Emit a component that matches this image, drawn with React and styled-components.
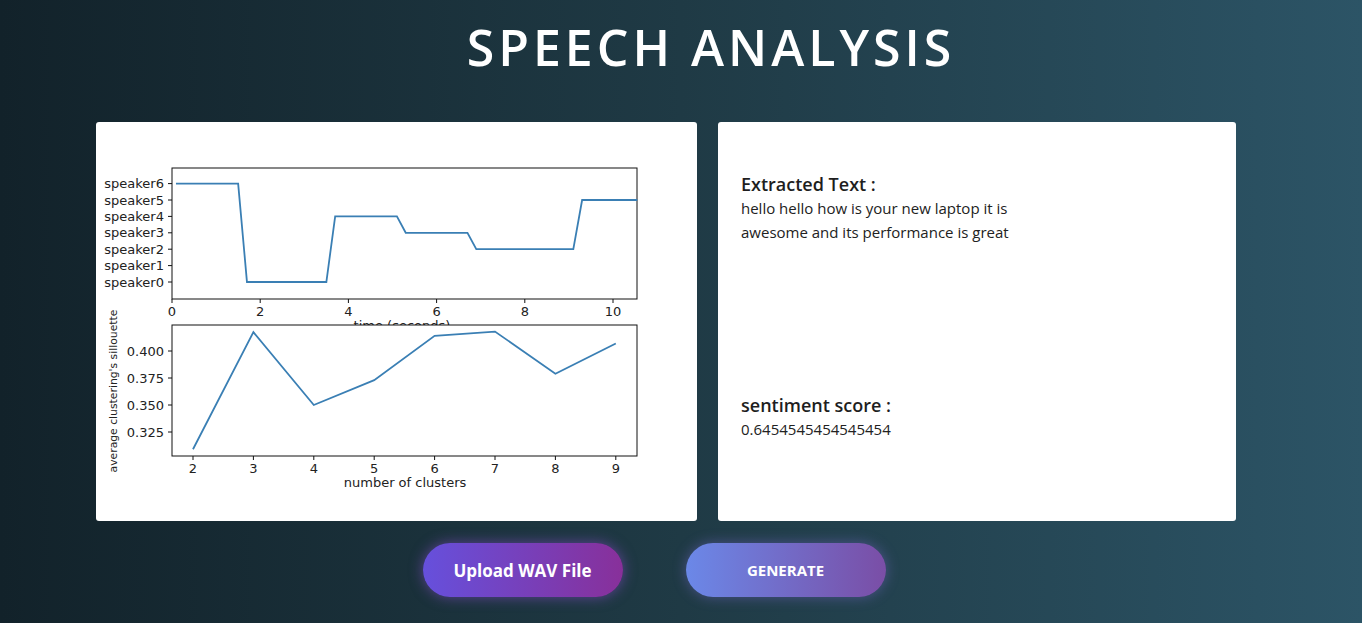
import React from 'react';
import styled, {createGlobalStyle} from 'styled-components';

const GlobalStyle = createGlobalStyle`
    html, body {
        margin: 0;
        padding: 0;
    }
    body {
        font-family: "Open Sans", "Noto Sans", sans-serif;
        background: linear-gradient(to right, #12222a 0%, #1f3a45 50%, #2c5466 100%);
        min-height: 623px;
        overflow: hidden;
    }
`;

const Page = styled.div`
    width: 1362px;
    height: 623px;
    display: flex;
    flex-direction: column;
`;
const Title = styled.h1`
    margin: 16px 0 0 0;
    padding-left: 60px;
    text-align: center;
    color: #ffffff;
    font-size: 50px;
    font-weight: 600;
    letter-spacing: 4px;
    line-height: 62px;
`;
const Cards = styled.div`
    display: flex;
    gap: 21px;
    padding-left: 96px;
    margin-top: 44px;
`;
const Card = styled.div`
    width: ${p => p.w}px;
    height: 399px;
    background: #ffffff;
    border-radius: 3px;
    box-sizing: border-box;
`;
const TextCard = styled(Card)`
    padding: 50px 23px 0 23px;
    color: #222;
`;
const Heading = styled.div`
    font-size: 18px;
    font-weight: 600;
    line-height: 24px;
    color: #1e1e1e;
    margin-top: ${p => p.top || 0}px;
`;
const Body = styled.div`
    font-size: 15px;
    line-height: 24px;
    max-width: 300px;
    color: #222;
`;
const Buttons = styled.div`
    display: flex;
    justify-content: center;
    gap: 63px;
    padding-right: 54px;
    margin-top: 22px;
`;
const Pill = styled.button`
    width: 200px;
    height: 54px;
    border: none;
    border-radius: 27px;
    color: #fff;
    font-family: inherit;
    font-weight: 700;
    font-size: ${p => p.size}px;
    background: ${p => p.bg};
    box-shadow: 0 0 14px ${p => p.glow};
    cursor: pointer;
`;

const Label = styled.text`
    font-family: "DejaVu Sans", sans-serif;
    font-size: ${p => p.size || 13}px;
    fill: #222;
`;
const Frame = styled.rect`
    fill: #fff;
    stroke: #111;
    stroke-width: 1;
`;
const Tick = styled.line`
    stroke: #111;
    stroke-width: 1;
`;
const Series = styled.polyline`
    fill: none;
    stroke: #3a7fb4;
    stroke-width: 1.8;
`;

// top plot: speaker timeline
const tx = t => 76 + t * 44.1;
const sy = s => 160 - s * 16.4;
const speakerPts = [[0.09, 6], [1.5, 6], [1.7, 0], [3.5, 0], [3.7, 4], [5.1, 4], [5.3, 3], [6.7, 3], [6.9, 2], [9.1, 2], [9.3, 5], [10.55, 5]];

// bottom plot: silhouette
const cx = n => 97 + (n - 2) * 60.4;
const cy = v => 229 - (v - 0.4) * 1080;
const silPts = [[2, 0.309], [3, 0.4175], [4, 0.35], [5, 0.373], [6, 0.414], [7, 0.418], [8, 0.379], [9, 0.407]];

const Charts = () => (
    <svg width="601" height="399" viewBox="0 0 601 399">
        {/* top axes */}
        <Label x="306" y="208" textAnchor="middle">time (seconds)</Label>
        <Frame x="76" y="46" width="465" height="131"/>
        {[0, 1, 2, 3, 4, 5, 6].map(s => (
            <g key={s}>
                <Tick x1="72" x2="76" y1={sy(s)} y2={sy(s)}/>
                <Label x="68" y={sy(s) + 4.5} textAnchor="end">speaker{s}</Label>
            </g>
        ))}
        {[0, 2, 4, 6, 8, 10].map(t => (
            <g key={t}>
                <Tick x1={tx(t)} x2={tx(t)} y1="177" y2="181"/>
                <Label x={tx(t)} y="194" textAnchor="middle">{t}</Label>
            </g>
        ))}
        <Series points={speakerPts.map(([t, s]) => `${tx(t)},${sy(s)}`).join(' ')}/>

        {/* bottom axes */}
        <Frame x="76" y="203" width="465" height="131"/>
        {[0.4, 0.375, 0.35, 0.325].map(v => (
            <g key={v}>
                <Tick x1="72" x2="76" y1={cy(v)} y2={cy(v)}/>
                <Label x="68" y={cy(v) + 4.5} textAnchor="end">{v.toFixed(3)}</Label>
            </g>
        ))}
        {[2, 3, 4, 5, 6, 7, 8, 9].map(n => (
            <g key={n}>
                <Tick x1={cx(n)} x2={cx(n)} y1="334" y2="338"/>
                <Label x={cx(n)} y="351" textAnchor="middle">{n}</Label>
            </g>
        ))}
        <Series points={silPts.map(([n, v]) => `${cx(n)},${cy(v)}`).join(' ')}/>
        <Label x="309" y="365" textAnchor="middle">number of clusters</Label>
        <Label size={10.8} transform="translate(21,269) rotate(-90)" textAnchor="middle">average clustering's sillouette</Label>
    </svg>
);

export default function App() {
    return (
        <Page>
            <GlobalStyle/>
            <Title>SPEECH ANALYSIS</Title>
            <Cards>
                <Card w={601}>
                    <Charts/>
                </Card>
                <TextCard w={518}>
                    <Heading>Extracted Text :</Heading>
                    <Body>hello hello how is your new laptop it is awesome and its performance is great</Body>
                    <Heading top={149}>sentiment score :</Heading>
                    <Body>0.6454545454545454</Body>
                </TextCard>
            </Cards>
            <Buttons>
                <Pill size={17} bg="linear-gradient(to right, #6650dc, #88309a)" glow="rgba(150, 80, 220, 0.55)">Upload WAV File</Pill>
                <Pill size={15} bg="linear-gradient(to right, #6b88e8, #7a4ea6)" glow="rgba(130, 110, 220, 0.45)">GENERATE</Pill>
            </Buttons>
        </Page>
    );
}
